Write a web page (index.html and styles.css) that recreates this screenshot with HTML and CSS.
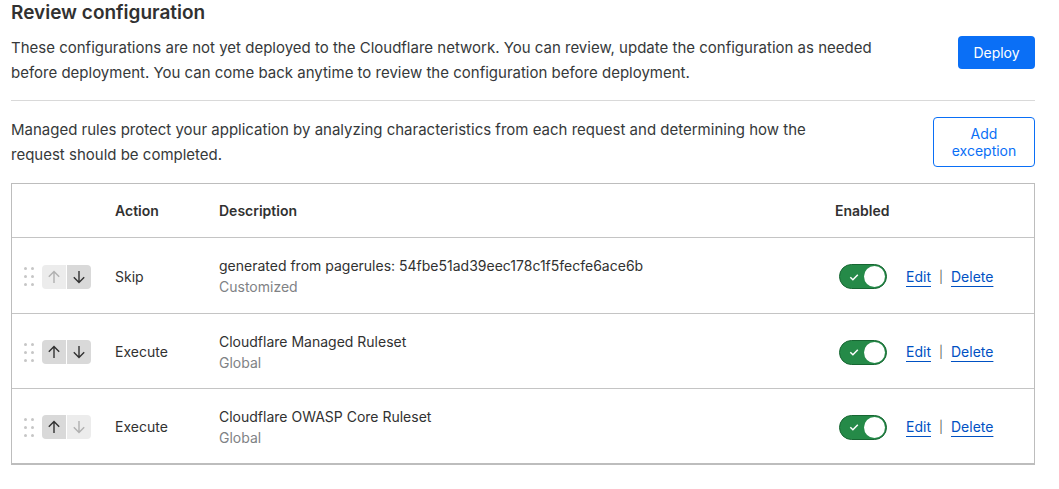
FILE: index.html
```html
<!DOCTYPE html>
<html lang="en">
<head>
<meta charset="utf-8">
<title>Review configuration</title>
<link rel="stylesheet" href="styles.css">
</head>
<body>
<main class="page">
  <h1 class="title">Review configuration</h1>
  <section class="intro">
    <p class="intro-text">These configurations are not yet deployed to the Cloudflare network. You can review, update the configuration as needed before deployment. You can come back anytime to review the configuration before deployment.</p>
    <button class="btn btn-primary">Deploy</button>
  </section>
  <hr class="divider">
  <section class="intro intro-rules">
    <p class="intro-text rules-text">Managed rules protect your application by analyzing characteristics from each request and determining how the request should be completed.</p>
    <button class="btn btn-outline">Add<br>exception</button>
  </section>

  <div class="table">
    <div class="row head">
      <div class="cell"></div>
      <div class="cell">Action</div>
      <div class="cell">Description</div>
      <div class="cell">Enabled</div>
    </div>

    <div class="row first">
      <div class="cell order">
        <span class="grip"><i></i><i></i><i></i><i></i><i></i><i></i></span>
        <span class="arrows">
          <span class="arrow disabled"><svg viewBox="0 0 16 16"><path d="M8 14V2.5M2.8 7.7 8 2.5l5.2 5.2"/></svg></span>
          <span class="arrow"><svg viewBox="0 0 16 16"><path d="M8 2v11.5M2.8 8.3 8 13.5l5.2-5.2"/></svg></span>
        </span>
      </div>
      <div class="cell">Skip</div>
      <div class="cell desc">
        <span class="desc-main">generated from pagerules: 54fbe51ad39eec178c1f5fecfe6ace6b</span>
        <span class="desc-sub">Customized</span>
      </div>
      <div class="cell enabled">
        <span class="toggle"><svg class="check" viewBox="0 0 12 12"><path d="M2.3 6.3 4.9 8.8 9.8 3.8"/></svg><span class="knob"></span></span>
        <span class="links"><a href="#">Edit</a><span class="sep">|</span><a href="#">Delete</a></span>
      </div>
    </div>

    <div class="row">
      <div class="cell order">
        <span class="grip"><i></i><i></i><i></i><i></i><i></i><i></i></span>
        <span class="arrows">
          <span class="arrow"><svg viewBox="0 0 16 16"><path d="M8 14V2.5M2.8 7.7 8 2.5l5.2 5.2"/></svg></span>
          <span class="arrow"><svg viewBox="0 0 16 16"><path d="M8 2v11.5M2.8 8.3 8 13.5l5.2-5.2"/></svg></span>
        </span>
      </div>
      <div class="cell">Execute</div>
      <div class="cell desc">
        <span class="desc-main">Cloudflare Managed Ruleset</span>
        <span class="desc-sub">Global</span>
      </div>
      <div class="cell enabled">
        <span class="toggle"><svg class="check" viewBox="0 0 12 12"><path d="M2.3 6.3 4.9 8.8 9.8 3.8"/></svg><span class="knob"></span></span>
        <span class="links"><a href="#">Edit</a><span class="sep">|</span><a href="#">Delete</a></span>
      </div>
    </div>

    <div class="row">
      <div class="cell order">
        <span class="grip"><i></i><i></i><i></i><i></i><i></i><i></i></span>
        <span class="arrows">
          <span class="arrow"><svg viewBox="0 0 16 16"><path d="M8 14V2.5M2.8 7.7 8 2.5l5.2 5.2"/></svg></span>
          <span class="arrow disabled"><svg viewBox="0 0 16 16"><path d="M8 2v11.5M2.8 8.3 8 13.5l5.2-5.2"/></svg></span>
        </span>
      </div>
      <div class="cell">Execute</div>
      <div class="cell desc">
        <span class="desc-main">Cloudflare OWASP Core Ruleset</span>
        <span class="desc-sub">Global</span>
      </div>
      <div class="cell enabled">
        <span class="toggle"><svg class="check" viewBox="0 0 12 12"><path d="M2.3 6.3 4.9 8.8 9.8 3.8"/></svg><span class="knob"></span></span>
        <span class="links"><a href="#">Edit</a><span class="sep">|</span><a href="#">Delete</a></span>
      </div>
    </div>
  </div>
</main>
</body>
</html>
```

FILE: styles.css
```css
* { box-sizing: border-box; }

html, body {
  margin: 0;
  padding: 0;
  background: #ffffff;
}

body {
  font-family: Inter, "Noto Sans", "Liberation Sans", sans-serif;
  color: #36393a;
  -webkit-font-smoothing: antialiased;
}

.page {
  width: 1024px;
  margin-left: 11px;
}

.title {
  margin: 0;
  padding-top: 1px;
  font-size: 19px;
  line-height: 24px;
  font-weight: 600;
  color: #313131;
}

.intro {
  display: flex;
  justify-content: space-between;
  align-items: flex-start;
  margin-top: 10px;
}

.intro-text {
  margin: 0;
  max-width: 900px;
  font-size: 15px;
  line-height: 25px;
}

.rules-text {
  max-width: 840px;
}

.btn {
  font-family: inherit;
  font-size: 14px;
  line-height: 17px;
  border-radius: 4px;
  cursor: pointer;
}

.btn-primary {
  margin-top: 1px;
  width: 77px;
  height: 33px;
  border: 0;
  background: #0a6ff6;
  color: #ffffff;
}

.btn-outline {
  width: 102px;
  height: 50px;
  border: 1px solid #0a6ff6;
  background: #ffffff;
  color: #0a6ff6;
}

.divider {
  margin: 15px 0 0;
  border: 0;
  border-top: 1px solid #d9d9d9;
}

.intro-rules {
  margin-top: 16px;
}

.table {
  margin-top: 16px;
  border: 1px solid #bdbdbd;
  border-bottom-width: 2px;
  font-size: 14px;
  color: #313131;
}

.row {
  display: grid;
  grid-template-columns: 103px 104px 1fr 199px;
  height: 75px;
  padding-top: 2px;
  border-top: 1px solid #c4c4c4;
  align-items: center;
}

.row.first {
  height: 76px;
}

.row.head {
  height: 53px;
  padding-top: 0;
  border-top: 0;
  font-weight: 600;
}

.cell {
  line-height: 20px;
}

.order {
  display: flex;
  align-items: center;
  padding-left: 12px;
  gap: 8px;
}

.grip {
  display: grid;
  grid-template-columns: 3px 3px;
  column-gap: 4px;
  row-gap: 5px;
}

.grip i {
  display: block;
  width: 3px;
  height: 3px;
  border-radius: 50%;
  background: #c6c6c6;
}

.arrows {
  display: flex;
  gap: 1px;
  border-radius: 4px;
  overflow: hidden;
}

.arrow {
  display: flex;
  align-items: center;
  justify-content: center;
  width: 24px;
  height: 24px;
  background: #d9d9d9;
}

.arrow svg {
  width: 16px;
  height: 16px;
  fill: none;
  stroke: #313131;
  stroke-width: 1.4;
}

.arrow.disabled {
  background: #ececec;
}

.arrow.disabled svg {
  stroke: #b0b0b0;
}

.desc {
  display: flex;
  flex-direction: column;
  gap: 1px;
}

.desc-main {
  color: #313131;
}

.desc-sub {
  color: #808285;
}

.enabled {
  display: flex;
  align-items: center;
  padding-left: 4px;
}

.toggle {
  position: relative;
  display: flex;
  align-items: center;
  width: 48px;
  height: 25px;
  border-radius: 13px;
  background: #258a48;
  border: 1px solid #176632;
  padding-left: 8px;
}

.check {
  width: 12px;
  height: 12px;
  fill: none;
  stroke: #ffffff;
  stroke-width: 1.5;
}

.knob {
  position: absolute;
  right: 1px;
  top: 1px;
  width: 21px;
  height: 21px;
  border-radius: 50%;
  background: #ffffff;
}

.links {
  display: flex;
  align-items: center;
  margin-left: 19px;
}

.links a {
  color: #0051c3;
  text-decoration: underline;
  text-underline-offset: 4px;
  text-decoration-thickness: 1px;
}

.sep {
  margin: 0 8px 0 8px;
  font-size: 12px;
  line-height: 14px;
  color: #5f5f5f;
}
```
